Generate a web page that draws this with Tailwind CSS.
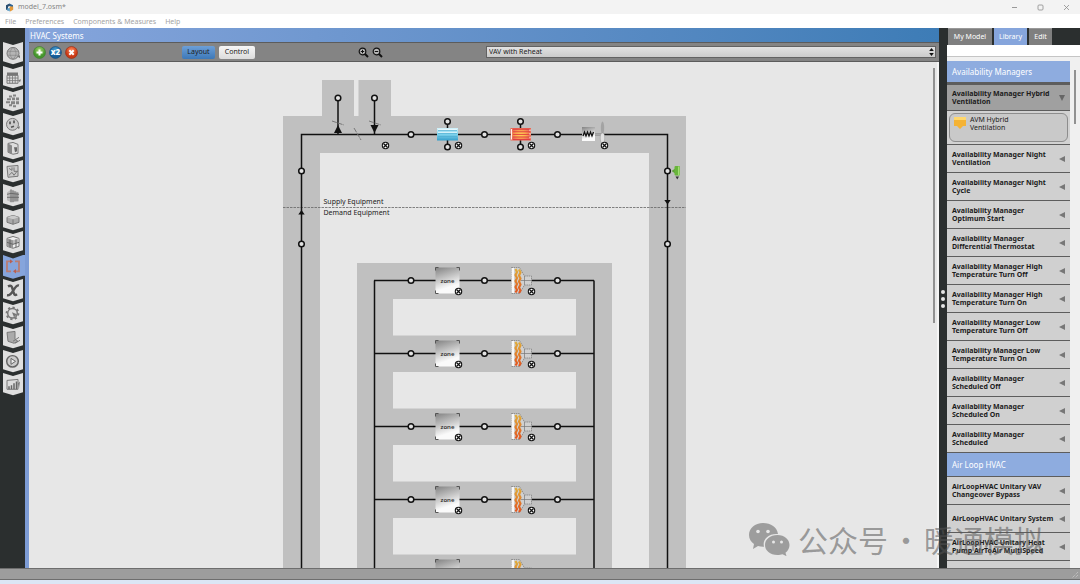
<!DOCTYPE html>
<html lang="en" class="h-full">
<head>
  <meta charset="UTF-8">
  <meta name="viewport" content="width=device-width, initial-scale=1.0">
  <title>model_7.osm*</title>
  <script src="https://cdn.jsdelivr.net/npm/@tailwindcss/browser@4"></script>
</head>
<body class="relative flex h-screen flex-col overflow-hidden bg-[#dbe6f5] pb-1 font-['Noto_Sans','Open_Sans',sans-serif] text-[7px] leading-[8px] text-[#1c1c1c]">

  <!-- title bar -->
  <header class="flex h-[14px] shrink-0 items-center justify-between bg-[#f3f3f3] pl-[5px] pr-[10px] text-[#858585]">
    <div class="flex items-center gap-1">
      <svg class="size-[9px]" viewBox="0 0 9 9"><path d="M4.500 .4 8 2.200v2.300L4.500 3.200z" fill="#2c6396"/><path d="M4.500.4 1 2.200v4.300l2 .9V3.800l2.200-1.200z" fill="#284d70"/><path d="M5 3.500h3.200v3.300L5.200 8.500 4 6z" fill="#e49a3b"/><path d="M2 5.500 4.800 5v3.600L2.200 7.300z" fill="#5c9fc9"/></svg>
      <span>model_7.osm*</span>
    </div>
    <div class="flex items-center gap-[19px]">
      <button aria-label="Minimize"><svg class="size-[7px]" viewBox="0 0 7 7"><path d="M1 3.500h5" stroke="#999"/></svg></button>
      <button aria-label="Maximize"><svg class="size-[7px]" viewBox="0 0 7 7"><rect x="1" y="1" width="5" height="5" rx="1" fill="none" stroke="#8b8b8b" stroke-width=".8"/></svg></button>
      <button aria-label="Close"><svg class="size-[7px]" viewBox="0 0 7 7"><path d="m1 1 5 5M6 1 1 6" stroke="#8b8b8b" stroke-width=".8"/></svg></button>
    </div>
  </header>
  <nav class="flex h-[14px] shrink-0 items-center gap-[9px] bg-white pt-px pl-[5px] text-[#a3a3a3]">
    <a href="#">File</a>
    <a href="#">Preferences</a>
    <a href="#">Components &amp; Measures</a>
    <a href="#">Help</a>
  </nav>

  <div class="flex min-h-0 flex-1">

    <!-- vertical tabs -->
    <nav class="w-[25px] shrink-0 bg-[#2b2f2f] pt-[14px]">
      <div id="rail" class="flex h-[355px] flex-col"></div>
    </nav>

    <main class="flex min-w-0 flex-1 flex-col border-l-4 border-[#7d9cd5] bg-[#e7e7e7]">
      <h1 class="flex h-[14px] shrink-0 items-center bg-linear-to-r from-[#86a5dc] to-[#3d7cb6] pt-px pl-px text-[8px] text-white">HVAC Systems</h1>

      <div class="grid h-5 shrink-0 grid-cols-[153px_176px_128px_1fr] items-center border-y border-[#5c5c5c] bg-[#848484]">
        <div class="flex gap-[3px] pl-1">
          <button aria-label="Add"><svg class="size-[13px]" viewBox="0 0 13 13"><circle cx="6.500" cy="6.500" r="6" fill="url(#green)" stroke="#3d7d28" stroke-width=".6"/><path d="M6.500 3.500v6M3.500 6.500h6" stroke="#fff" stroke-width="2"/></svg></button>
          <button aria-label="Duplicate"><svg class="size-[13px]" viewBox="0 0 13 13"><circle cx="6.500" cy="6.500" r="6" fill="url(#blue)" stroke="#164d7d" stroke-width=".6"/><text x="6.500" y="9.200" text-anchor="middle" font-size="8" font-weight="800" fill="#fff">x2</text></svg></button>
          <button aria-label="Remove"><svg class="size-[13px]" viewBox="0 0 13 13"><circle cx="6.500" cy="6.500" r="6" fill="url(#red)" stroke="#98290e" stroke-width=".6"/><path d="m4.300 4.300 4.400 4.400M8.700 4.300 4.300 8.700" stroke="#fff" stroke-width="2"/></svg></button>
        </div>
        <div class="flex gap-1">
          <button class="h-[13px] w-[33px] rounded-xs bg-linear-to-b from-[#6c9fd8] to-[#3c78b8]">Layout</button>
          <button class="h-[13px] w-9 rounded-xs bg-linear-to-b from-[#f7f7f7] to-[#dcdcdc]">Control</button>
        </div>
        <div class="flex gap-[3px]">
          <button aria-label="Zoom in"><svg class="size-[11px]" viewBox="0 0 11 11"><circle cx="4.500" cy="4.500" r="3.300" fill="#b5b5b5" stroke="#111" stroke-width="1.200"/><path d="M4.500 2.800v3.400M2.800 4.500h3.400" stroke="#111"/><path d="m7 7 3 3" stroke="#111" stroke-width="2"/></svg></button>
          <button aria-label="Zoom out"><svg class="size-[11px]" viewBox="0 0 11 11"><circle cx="4.500" cy="4.500" r="3.300" fill="#b5b5b5" stroke="#111" stroke-width="1.200"/><path d="M2.800 4.500h3.400" stroke="#111"/><path d="m7 7 3 3" stroke="#111" stroke-width="2"/></svg></button>
        </div>
        <div class="relative mr-[3px] flex">
          <select aria-label="HVAC system" class="h-3 w-full appearance-none border border-[#626262] bg-linear-to-b from-[#e2e2e2] to-[#cbcbcb] pl-0.5">
            <option>VAV with Reheat</option>
          </select>
          <svg class="pointer-events-none absolute top-0.5 right-0.5 h-2 w-[5px]" viewBox="0 0 5 8"><path d="M2.500 0 4.800 3H.2zM2.500 8 .2 5h4.600z" fill="#111"/></svg>
        </div>
      </div>

      <div class="relative flex min-h-0 flex-1 justify-center overflow-hidden">
        <svg class="h-[700px] w-[403px] shrink-0" viewBox="283 62 403 700">
          <defs>
            <radialGradient id="green" cy=".3"><stop stop-color="#a5d86c"/><stop offset="1" stop-color="#45962f"/></radialGradient>
            <radialGradient id="blue" cy=".3"><stop stop-color="#51a8d8"/><stop offset="1" stop-color="#175d98"/></radialGradient>
            <radialGradient id="red" cy=".3"><stop stop-color="#ff8457"/><stop offset="1" stop-color="#c93a16"/></radialGradient>
            <linearGradient id="metal" x2=".3" y2="1"><stop stop-color="#828282"/><stop offset=".85" stop-color="#fafafa"/></linearGradient>
            <linearGradient id="cold" y2="1" x2="0"><stop stop-color="#d5f3fb"/><stop offset=".5" stop-color="#7fd3ed"/><stop offset="1" stop-color="#359fcb"/></linearGradient>
            <radialGradient id="hot"><stop stop-color="#ffd65a"/><stop offset=".5" stop-color="#ffb24e"/><stop offset="1" stop-color="#ea6a55"/></radialGradient>
            <linearGradient id="heat" y2="1" x2="0"><stop stop-color="#e0ae3a"/><stop offset="1" stop-color="#e2531e"/></linearGradient>
            <circle id="node" r="2.800" fill="#e2e2e2" stroke="#111" stroke-width="1.500"/>
            <g id="del"><circle r="3.200" fill="#fff" stroke="#111" stroke-width="1.100"/><path d="M-2-2 2 2M2-2-2 2" stroke="#111" stroke-width="1.300"/></g>
            <g id="branch">
              <path d="M374 0h220" stroke="#111" stroke-width="1.500"/>
              <rect x="393" y="18.500" width="183" height="36.500" fill="#e7e7e7"/>
              <use href="#node" x="411"/><use href="#node" x="484.500"/><use href="#node" x="557.500"/>
              <rect x="435.500" y="-13" width="24" height="26" fill="url(#metal)"/>
              <path d="M435.500-10v-3h3m18 0h3v3m-24 20v3h3" fill="none" stroke="#555"/>
              <text x="447.500" y="2" text-anchor="middle" font-size="6" font-weight="600" fill="#333">zone</text>
              <path d="M511.500-13h8l5 8.500h7v9h-7l-5 8.500h-8z" fill="#d0d0d0" stroke="#777" stroke-width=".7" stroke-dasharray="1.500 .7"/>
              <path d="M511.500-12.500h2.500v25h-2.500z" fill="#f7f7f7"/>
              <path d="M515.500-11.500l1.500 3-1.500 3 1.500 3-1.500 3 1.500 3-1.500 3 1.500 3-1.500 2.500m3.500-23 1.500 3-1.500 3 1.500 3-1.500 3 1.500 3-1.500 3 1.500 3-1.500 2.500" fill="none" stroke="url(#heat)" stroke-width="2.200" stroke-linejoin="round"/>
              <path d="M521 0h11m-7.500-4.500v9" stroke="#777" stroke-width=".7"/>
              <use href="#del" x="458.500" y="11"/><use href="#del" x="531.500" y="11"/>
            </g>
          </defs>

          <!-- duct background -->
          <path fill="#c0c0c0" d="M283 116h39V80h32v36h4.500V80H391v36h295v650H283z"/>
          <path fill="#e7e7e7" d="M320 153h329v613H320z"/>
          <path fill="#c0c0c0" d="M357 263h255v503H357z"/>

          <!-- supply loop -->
          <path d="M283 207.500h403" stroke="#666" stroke-width=".8" stroke-dasharray="2.500 1"/>
          <path d="M301.500 766V134.500h366V766M338 98v36M374.500 98v36" fill="none" stroke="#111" stroke-width="1.500"/>
          <path d="m338 125 4 8h-8zM374.500 133l-4-8h8zM301.500 210l3.200 4.500h-6.400zM667.500 204.500l-3.200-4.500h6.400z" fill="#111"/>
          <path d="m332 121 12 4m25-4 12 4m-27 3 7 12" stroke="#777" stroke-width="1" stroke-dasharray="5 1"/>
          <use href="#node" x="338" y="98"/><use href="#node" x="374.500" y="98"/>
          <use href="#node" x="411" y="134.500"/><use href="#node" x="484.500" y="134.500"/><use href="#node" x="557.500" y="134.500"/>
          <use href="#node" x="301.500" y="171"/><use href="#node" x="301.500" y="244"/>
          <use href="#node" x="667.500" y="171"/><use href="#node" x="667.500" y="244"/>

          <!-- cooling coil -->
          <path d="M447.500 122v25M520.500 122v25" stroke="#111" stroke-width="1.500"/>
          <rect x="437" y="128" width="21" height="12.500" fill="url(#cold)"/>
          <path d="M438 130.500h19m-19 3h19m-19 3h19" stroke="#4aa9cf" stroke-width=".6"/>
          <path d="M438 129.500h19m-19 3h19" stroke="#fff" stroke-width=".6"/>
          <use href="#node" x="447.500" y="121.500"/><use href="#node" x="447.500" y="147"/>
          <!-- heating coil -->
          <rect x="510.500" y="128" width="20.500" height="12.500" fill="url(#hot)"/>
          <path d="M513 129.200h17m-17 2.600h17m-17 2.600h17m-17 2.600h17m-17 2.600h17" stroke="#dc3340" stroke-width=".9"/>
          <path d="M511.500 129v10.500m18.500-10v1.600m0 2v1.600m0 2v1.600" stroke="#fff" stroke-width=".9"/>
          <use href="#node" x="520.500" y="121.500"/><use href="#node" x="520.500" y="147"/>
          <!-- fan -->
          <rect x="582" y="127" width="13" height="14" fill="url(#metal)"/>
          <path d="M595 134.500h8" stroke="#aaa" stroke-width="2"/>
          <path d="m583 136 1.500-4 1.500 4 1.500-4 1.500 4 1.500-4 1.500 4 1.500-4" fill="none" stroke="#111" stroke-width="1.300"/>
          <ellipse cx="602.500" cy="128" rx="1.700" ry="6.500" fill="#a3a3a3"/><ellipse cx="602.500" cy="138" rx="2.200" ry="5" fill="#e2e2e2" stroke="#888" stroke-width=".4"/>
          <use href="#del" x="385.500" y="145.500"/><use href="#del" x="458.500" y="145.500"/><use href="#del" x="531.500" y="145.500"/><use href="#del" x="604.500" y="145.500"/>
          <!-- setpoint manager -->
          <path d="m671.500 171 4.500-3v6z" fill="#5e9f38"/><rect x="674.500" y="166" width="5.500" height="9.500" rx="1" fill="#68b53a"/><path d="M678 166.500h1.500v8.500H678z" fill="#a2dc75"/><path d="M675.500 176.500h3.500l-1.700 3z" fill="#333"/>

          <text x="323.500" y="204" font-size="7" fill="#1c1c1c">Supply Equipment</text>
          <text x="323.500" y="215" font-size="7" fill="#1c1c1c">Demand Equipment</text>

          <!-- demand branches -->
          <path d="M374.500 766V280.500M594 280.500V766" stroke="#111" stroke-width="1.500"/>
          <use href="#branch" y="280.500"/><use href="#branch" y="353.500"/><use href="#branch" y="426.500"/><use href="#branch" y="499.500"/><use href="#branch" y="572.500"/><use href="#branch" y="645.500"/>
        </svg>
        <div class="absolute top-[6px] right-1 h-[255px] w-0.5 bg-[#919191]"></div>
        <div class="absolute inset-y-0 right-0 w-0.5 bg-[#f5f5f5]"></div>
      </div>
    </main>

    <!-- splitter -->
    <div class="flex w-2 shrink-0 flex-col items-center gap-[3px] bg-[#2b2f2f] pt-[262px]">
      <span class="size-1 rounded-full bg-[#e6e6e6]"></span>
      <span class="size-1 rounded-full bg-[#e6e6e6]"></span>
      <span class="size-1 rounded-full bg-[#e6e6e6]"></span>
    </div>

    <aside class="flex w-[133px] shrink-0 flex-col bg-[#f0f0f0]">
      <div class="flex h-[17px] shrink-0 gap-0.5 bg-[#2b2f2f] pl-px text-white">
        <button class="w-11 border-t border-[#999] bg-[#7f7f7f]">My Model</button>
        <button class="w-[33px] bg-[#86a5dc]">Library</button>
        <button class="w-[23px] border-t border-[#999] bg-[#7f7f7f]">Edit</button>
      </div>
      <input type="text" aria-label="Search library" class="h-3 w-full shrink-0 border-b border-[#c5c5c5] bg-white px-1 outline-none">
      <div class="flex min-h-0 flex-1 pt-1">
        <div class="min-w-0 flex-1 overflow-hidden">
          <h2 class="flex h-[21px] items-center bg-[#8eacdf] pl-[5px] text-[8px] text-white">Availability Managers</h2>
          <button class="flex h-[29px] w-full items-center justify-between border-y border-t-3 border-[#5d5d5d] bg-[#a0a0a0] px-[5px] text-left font-bold">
            <span>Availability Manager Hybrid<br>Ventilation</span>
            <svg class="size-[6px] shrink-0" viewBox="0 0 6 6"><path d="M0 0h6L3 6z" fill="#666"/></svg>
          </button>
          <div class="h-[33px] bg-[#d2d2d2] px-0.5 pt-0.5">
            <div class="flex h-[29px] gap-[3px] rounded-md border border-[#8d8d8d] bg-[#c9c9c9] pt-0.5 pl-[3px]">
              <svg class="size-[14px] shrink-0" viewBox="0 0 14 14"><path d="M1 1h12v9h-3l-3 3-3-3H1z" fill="#f5b335"/><path d="M1 1h12v3H1z" fill="#ffd76c"/></svg>
              <span>AVM Hybrid<br>Ventilation</span>
            </div>
          </div>
          <div id="managers"></div>
          <h2 class="flex h-6 items-center border-t border-[#5d5d5d] bg-[#8eacdf] pl-[5px] text-[8px] text-white">Air Loop HVAC</h2>
          <div id="airloops"></div>
        </div>
        <div class="w-[10px] shrink-0 pt-[9px] pl-1"><div class="h-[54px] w-0.5 bg-[#919191]"></div></div>
      </div>
    </aside>
  </div>

  <footer class="flex h-3 shrink-0 items-end justify-end border-y border-[#6e6e6e] bg-[#9d9d9d] pr-px">
    <svg class="size-[7px]" viewBox="0 0 7 7"><path d="M6 0 0 6M6 3 3 6" stroke="#ccc" stroke-dasharray="1 1"/></svg>
  </footer>

  <!-- watermark -->
  <div class="pointer-events-none absolute right-[36px] bottom-[28px] flex items-center font-['Noto_Sans_CJK_SC',sans-serif] text-[30px] leading-[32px] font-normal text-[#555]/55">
    <svg class="mr-2 h-[34px] w-[42px]" viewBox="0 0 42 34">
      <path fill="#9d9d9d" d="M15 1C7 1 1 6 1 13c0 4 2 7 5 9l-1 5 5-3c2 .6 4 .8 6 .7C14 17 21 11 30 12 29 5 23 1 15 1z"/>
      <path fill="#9d9d9d" d="M29.500 13C22 13 17 17.500 17 23s5 10 12.500 10c2 0 3.500-.3 5-.8l4 2-1-3.400c2.500-2 4-4.600 4-7.800 0-5.500-5-10-12-10z"/>
      <g fill="#e7e7e7"><circle cx="10" cy="9.500" r="1.800"/><circle cx="20" cy="9.500" r="1.800"/><circle cx="25.500" cy="20" r="1.500"/><circle cx="33.500" cy="20" r="1.500"/></g>
    </svg>
    <span>公众号</span>
    <span class="w-9 text-center">·</span>
    <span>暖通模拟</span>
  </div>

  <script>
    // rail icons, drawn in a 16x16 box
    const icons = [
      ['Site', '<circle cx="8" cy="8" r="6" fill="#b5b5b5" stroke="#777"/><path d="M2.500 6h11M2.500 10h11M8 2c-4 4-4 8 0 12 4-4 4-8 0-12" fill="none" stroke="#888" stroke-width=".7"/><path d="m12 11 3-1v3z" fill="#777"/>'],
      ['Schedules', '<path d="M2 3h11v3H2z" fill="#777"/><path d="M2 6h11v8H2z" fill="#ddd" stroke="#777"/><path d="M2 8.700h11M2 11.300h11M4.700 6v8m2.800-8v8m2.700-8v8" stroke="#777" stroke-width=".8"/><path d="m13 11 3-1-1 3z" fill="#777"/>'],
      ['Constructions', '<path d="M4 3h3v2H4zm4-1h3v2H8zM2 6h4v2H2zm5-1h3v3H7zm4 0h3v3h-3zM1 9h4v2H1zm5 0h4v3H6zm5 0h3v3h-3zM4 12h3v2H4zm4 1h3v2H8z" fill="#848484"/>'],
      ['Loads', '<circle cx="7.500" cy="8" r="6" fill="#ccc" stroke="#777"/><path d="M5 5v3m4-4v3m-3 4 3-1" stroke="#555" stroke-width="1.700"/><path d="m12 11 3-1-1 3z" fill="#777"/>'],
      ['Space Types', '<path d="M3 3 8 2l5 2v9l-5 1-5-2z" fill="#ddd" stroke="#777"/><path d="M3 3 7 5v9l-4-2z" fill="#888"/><path d="M9 7h3v4l-2 1z" fill="#666"/>'],
      ['Geometry', '<path d="m2 3 11-1v11l-10 1z" fill="#ccc" stroke="#777"/><path d="m4 5 3 2V4m2 0v4h4M4 12l3-3 2 3 3-4" fill="none" stroke="#777"/>'],
      ['Facility', '<path d="m2 5 4-3 8 3v9l-8 1-4-2z" fill="#bbb"/><path d="M6 2v13m2-12v12m2-11v10m2-9v9M2 7l4-1 8 1M2 10h12" fill="none" stroke="#666" stroke-width=".9"/>'],
      ['Spaces', '<path d="m2 6 6-2 6 2v5l-6 2-6-2z" fill="#aaa" stroke="#777"/><path d="m2 6 6 2 6-2-6-2z" fill="#ccc"/><path d="M8 8v5" stroke="#777"/>'],
      ['Thermal Zones', '<path d="m2 4 6-2 6 2v8l-6 2-6-2z" fill="#eee" stroke="#777"/><path d="m2 4 6 2v8l-6-2z" fill="#999"/><path d="M8 6l6-2v4L8 10z" fill="#bbb"/><path d="M2 8l6 2 6-2M5 5v8m6-8v8" fill="none" stroke="#666"/>'],
      ['HVAC Systems', '<path d="M6 3H2v10h4M10 3h4v10h-4" fill="none" stroke="#b97d72" stroke-width="1.800"/><path d="m5 .800 3 2.200-3 2.200zM11 10.800 8 13l3 2.200zM9 3h2M5 13h2" fill="#b86052"/>'],
      ['Output Variables', '<path d="M3 4c4-2 4 1 5 4s1 6 4 4M14 3C9 2 8 14 2 13" fill="none" stroke="#555" stroke-width="2.500"/>'],
      ['Simulation Settings', '<circle cx="7.500" cy="8" r="4.800" fill="#ddd" stroke="#777" stroke-width="1.500"/><circle cx="7.500" cy="8" r="6" fill="none" stroke="#777" stroke-width="1.800" stroke-dasharray="2.200 2.400"/><path d="m7 7 5 2-3 3z" fill="#777"/>'],
      ['Measures', '<path d="m2 3 8-1v8l3 2-4 2-6-2z" fill="#aaa" stroke="#777"/><path d="m8 12 6-4m-4 6 5-3" stroke="#777"/>'],
      ['Run Simulation', '<circle cx="7.500" cy="8" r="5.800" fill="#ccc" stroke="#666" stroke-width="1.500"/><path d="M6 5v6l4.500-3z" fill="#eee" stroke="#666"/>'],
      ['Results Summary', '<path d="M2 4 13 3v10H2z" fill="#ddd" stroke="#777"/><path d="M4 13v-3m2.500 3V9M9 13V7m2.500 6V5" stroke="#666" stroke-width="1.500"/><path d="m13 7 2-2-1 7z" fill="#777"/>'],
    ];
    document.getElementById('rail').innerHTML = icons.map(([name, art]) => {
      const on = name === 'HVAC Systems';
      const shape = on ? 'M3 0 13 3.500 23 0H25V21H23L13 24 3 21z' : 'M3 0 13 3 23 0V19.500L13 22.500 3 19.500z';
      return `<a href="#" aria-label="${name}" class="min-h-0 flex-1"><svg class="h-full w-[25px]" viewBox="0 0 25 24" preserveAspectRatio="none"><path d="${shape}" fill="${on ? '#86a5dc' : '#dfdfdf'}"/><svg x="5" y="3.500" width="16" height="16" viewBox="0 0 16 16">${art}</svg></svg></a>`;
    }).join('');

    const row = (text) => `<button class="flex h-7 w-full items-center justify-between border-t border-[#5d5d5d] bg-[#d0d0d0] px-[5px] text-left font-bold">
      <span class="whitespace-nowrap">${text}</span><svg class="size-[6px] shrink-0" viewBox="0 0 6 6"><path d="M6 0v6L0 3z" fill="#777"/></svg></button>`;
    const managers = ['Night<br>Ventilation', 'Night<br>Cycle', '<br>Optimum Start', '<br>Differential Thermostat', 'High<br>Temperature Turn Off', 'High<br>Temperature Turn On',
      'Low<br>Temperature Turn Off', 'Low<br>Temperature Turn On', '<br>Scheduled Off', '<br>Scheduled On', '<br>Scheduled'];
    document.getElementById('managers').innerHTML = managers.map(m => row('Availability Manager ' + m)).join('');
    const airloops = ['Unitary VAV<br>Changeover Bypass', 'Unitary System', 'Unitary Heat<br>Pump AirToAir MultiSpeed', 'Unitary Heat<br>Pump AirToAir'];
    document.getElementById('airloops').innerHTML = airloops.map(a => row('AirLoopHVAC ' + a)).join('');
  </script>
</body>
</html>
